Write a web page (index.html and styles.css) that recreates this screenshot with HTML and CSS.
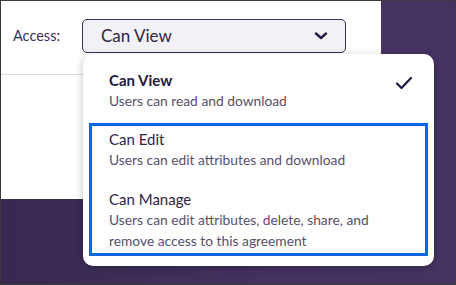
FILE: index.html
```html
<!DOCTYPE html>
<html lang="en">
<head>
<meta charset="UTF-8" />
<title>Access</title>
<link rel="stylesheet" href="styles.css">
</head>
<body>
<div class="frame">
  <div class="panel">
    <div class="field">
      <label>Access:</label>
      <div class="select">
        <span>Can View</span>
        <svg class="chev" width="14" height="8" viewBox="0 0 14 8"><path d="M2 1.5 L7 6 L12 1.5" fill="none" stroke="#2a1d45" stroke-width="2.4" stroke-linecap="round" stroke-linejoin="round"/></svg>
      </div>
    </div>
  </div>

  <!-- dropdown menu -->
  <div class="menu">
    <div class="opt selected">
      <div class="opt-title">Can View</div>
      <div class="opt-desc">Users can read and download</div>
      <svg class="check" width="18" height="14" viewBox="0 0 18 14"><path d="M2 7.5 L6.5 12 L16 2" fill="none" stroke="#22173d" stroke-width="2.2" stroke-linecap="round" stroke-linejoin="round"/></svg>
    </div>
    <div class="focus-box">
      <div class="opt">
        <div class="opt-title">Can Edit</div>
        <div class="opt-desc">Users can edit attributes and download</div>
      </div>
      <div class="opt">
        <div class="opt-title">Can Manage</div>
        <div class="opt-desc">Users can edit attributes, delete, share, and<br>remove access to this agreement</div>
      </div>
    </div>
  </div>
</div>
</body>
</html>
```

FILE: styles.css
```css
body{margin:0;font-family:Lato,"Noto Sans",sans-serif;color:#2b2142}
.frame{position:relative;width:456px;height:285px;box-sizing:border-box;border:1px solid #3a3a3a;background:linear-gradient(90deg,#37294f,#443260 60%,#453462);overflow:hidden}
.panel{width:380px;height:198px;background:#fff}
.field{display:flex;align-items:center;height:74px;border-bottom:1px solid #dcdce0;padding-left:12px;box-sizing:border-box;padding-bottom:4px}
.field label{font-size:14.5px;color:#3b3150;width:69px}
.select{display:flex;align-items:center;justify-content:space-between;width:264px;height:34px;box-sizing:border-box;border:1px solid #3d2f5a;border-radius:5px;background:#f2f1f5;padding:0 17px 0 18px;font-size:17px;color:#2f2545}
.chev{margin-top:1px}

/* ---- dropdown ---- */
.menu{position:absolute;left:82px;top:53px;width:351px;height:212px;background:#fff;border-radius:10px;box-shadow:0 2px 8px rgba(0,0,0,.25);padding:0 6px;box-sizing:border-box}
.opt{position:relative;padding:0 0 0 20px}
.opt.selected{padding-top:16px;padding-bottom:12px}
.opt-title{font-size:15px;line-height:20px;color:#2e2447}
.selected .opt-title{font-weight:bold;color:#22173d}
.opt-desc{font-size:13.8px;line-height:21px;color:#574f6b}
.check{position:absolute;right:15px;top:22px}
.focus-box{border:3px solid #0a66e4;padding:3px 0 2px}
.focus-box .opt{padding-left:17px}
.focus-box .opt + .opt{margin-top:19px}
```
